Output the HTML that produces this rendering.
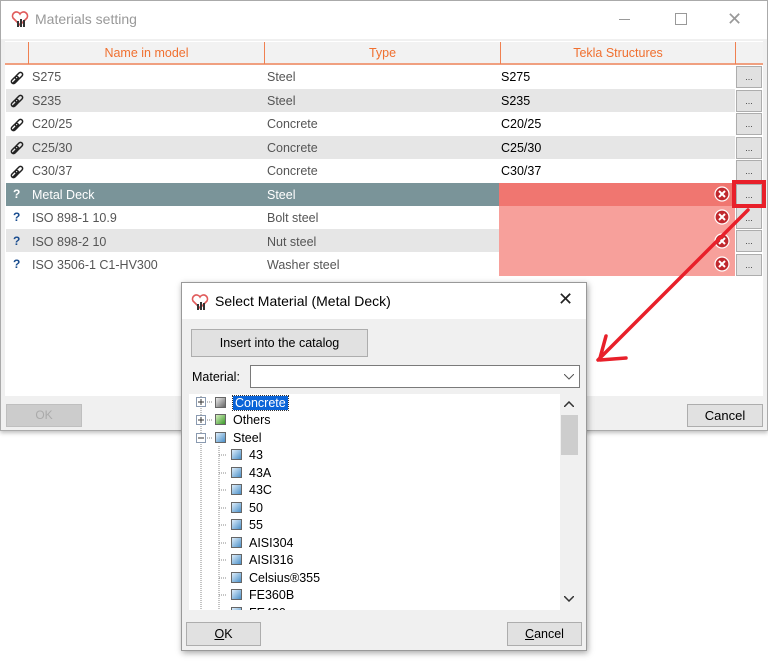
<!DOCTYPE html>
<html><head><style>
*{box-sizing:border-box;margin:0;padding:0}
body{width:768px;height:664px;background:#fff;position:relative;overflow:hidden;font-family:"Liberation Sans",sans-serif;font-size:12px;color:#000}
.abs{position:absolute}
.win{left:0;top:0;width:768px;height:431px;border:1px solid #aaa;background:#f0f0f0;box-shadow:0 2px 4px rgba(0,0,0,.25)}
.row{position:absolute;left:5px;width:729px;height:23px;line-height:23px}
.btn{position:absolute;left:735px;width:26px;height:22px;background:#e1e1e1;border:1px solid #adadad;font-size:9px;text-align:center;line-height:20px;color:#444}
.hdr{color:#f07030;font-size:12.5px;text-align:center;line-height:22px;position:absolute;top:0;height:22px;border-right:1px solid #f08050}
.wb{background:#e1e1e1;border:1px solid #adadad;text-align:center;position:absolute}
.sq{display:inline-block;width:11px;height:11px;border:1px solid #666;vertical-align:-1px;margin-right:7px;background:linear-gradient(135deg,#dfeefa,#4a8fc8)}
.ti{position:absolute;font-size:12.5px;height:18px;line-height:18px}
</style></head><body>
<div class="abs win">
 <div class="abs" style="left:0;top:0;width:766px;height:38px;background:#fff"></div>
 <div class="abs" style="left:10px;top:9px;width:18px;height:18px">
  <svg width="18" height="18"><path d="M9 15 L2 8 A4 4 0 0 1 9 4 A4 4 0 0 1 16 8 Z" fill="none" stroke="#e05a5a" stroke-width="1.6"/><rect x="6" y="11" width="2" height="6" fill="#333"/><rect x="9" y="9" width="2" height="8" fill="#333"/><rect x="12" y="10" width="2" height="7" fill="#333"/></svg></div>
 <div class="abs" style="left:34px;top:10px;font-size:14px;color:#999">Materials setting</div>
 <div class="abs" style="left:618px;top:18px;width:11px;height:1px;background:#999"></div>
 <div class="abs" style="left:674px;top:12px;width:12px;height:12px;border:1px solid #999"></div>
 <div class="abs" style="left:726px;top:8px;font-size:18px;color:#999">✕</div>
 <div class="abs" style="left:4px;top:40px;width:758px;height:355px;background:#fff"></div>
 <div class="abs" style="left:4px;top:41px;width:758px;height:23px;background:#f2f2f2;border-bottom:2px solid #f0a080">
  <div class="hdr" style="left:0;width:24px"></div>
  <div class="hdr" style="left:24px;width:236px">Name in model</div>
  <div class="hdr" style="left:260px;width:236px">Type</div>
  <div class="hdr" style="left:496px;width:235px">Tekla Structures</div>
 </div>
 <div class="row" style="top:64px;background:#fff"></div>
 <div class="row" style="top:88px;background:#e6e6e6"></div>
 <div class="row" style="top:111px;background:#fff"></div>
 <div class="row" style="top:135px;background:#e6e6e6"></div>
 <div class="row" style="top:158px;background:#fff"></div>
 <div class="row" style="top:182px;background:#7a9499"></div>
 <div class="row" style="top:205px;background:#fff"></div>
 <div class="row" style="top:228px;background:#e6e6e6"></div>
 <div class="row" style="top:252px;background:#fff"></div>
 <div class="abs" style="left:498px;top:182px;width:236px;height:23px;background:#f07670"></div>
 <div class="abs" style="left:498px;top:205px;width:236px;height:70px;background:#f7a09b"></div>
 <div class="abs" style="left:0;top:0;width:766px;font-size:12.5px;color:#555">
  <div class="abs" style="left:31px;top:69px">S275</div><div class="abs" style="left:266px;top:69px">Steel</div><div class="abs" style="left:500px;top:69px;color:#000">S275</div>
  <div class="abs" style="left:31px;top:93px">S235</div><div class="abs" style="left:266px;top:93px">Steel</div><div class="abs" style="left:500px;top:93px;color:#000">S235</div>
  <div class="abs" style="left:31px;top:116px">C20/25</div><div class="abs" style="left:266px;top:116px">Concrete</div><div class="abs" style="left:500px;top:116px;color:#000">C20/25</div>
  <div class="abs" style="left:31px;top:140px">C25/30</div><div class="abs" style="left:266px;top:140px">Concrete</div><div class="abs" style="left:500px;top:140px;color:#000">C25/30</div>
  <div class="abs" style="left:31px;top:163px">C30/37</div><div class="abs" style="left:266px;top:163px">Concrete</div><div class="abs" style="left:500px;top:163px;color:#000">C30/37</div>
  <div class="abs" style="left:31px;top:187px;color:#fff">Metal Deck</div><div class="abs" style="left:266px;top:187px;color:#fff">Steel</div>
  <div class="abs" style="left:31px;top:210px">ISO 898-1 10.9</div><div class="abs" style="left:266px;top:210px">Bolt steel</div>
  <div class="abs" style="left:31px;top:234px">ISO 898-2 10</div><div class="abs" style="left:266px;top:234px">Nut steel</div>
  <div class="abs" style="left:31px;top:257px">ISO 3506-1 C1-HV300</div><div class="abs" style="left:266px;top:257px">Washer steel</div>
 </div>
 <svg class="abs" style="left:8px;top:70px" width="16" height="110">
  <g fill="none" stroke="#222" stroke-width="2">
   <g id="lk"><path d="M4 12 L9 7 M3 9 L6 6 A2 2 0 0 1 9 9 L6 12 A2 2 0 0 1 3 9 Z M7 5 L10 2 A2 2 0 0 1 13 5 L10 8 A2 2 0 0 1 7 5 Z" stroke-width="1.5"/></g>
   <use href="#lk" y="23"/><use href="#lk" y="47"/><use href="#lk" y="70"/><use href="#lk" y="94"/>
  </g></svg>
 <div class="abs" style="left:12px;top:186px;color:#fff;font-weight:bold;font-size:12px">?</div>
 <div class="abs" style="left:12px;top:209px;color:#1a4d8f;font-weight:bold;font-size:12px">?</div>
 <div class="abs" style="left:12px;top:233px;color:#1a4d8f;font-weight:bold;font-size:12px">?</div>
 <div class="abs" style="left:12px;top:256px;color:#1a4d8f;font-weight:bold;font-size:12px">?</div>
 <svg class="abs" style="left:713px;top:185px" width="16" height="90">
  <g id="er"><circle cx="8" cy="8" r="7" fill="#c0282d" stroke="#fff" stroke-width="1.2"/><path d="M5 5 L11 11 M11 5 L5 11" stroke="#fff" stroke-width="2"/></g>
  <use href="#er" y="23"/><use href="#er" y="47"/><use href="#er" y="70"/></svg>
 <div class="btn" style="top:65px">...</div>
 <div class="btn" style="top:89px">...</div>
 <div class="btn" style="top:112px">...</div>
 <div class="btn" style="top:136px">...</div>
 <div class="btn" style="top:159px">...</div>
 <div class="btn" style="top:183px">...</div>
 <div class="btn" style="top:206px">...</div>
 <div class="btn" style="top:229px">...</div>
 <div class="btn" style="top:253px">...</div>
 <div class="wb" style="left:5px;top:403px;width:76px;height:23px;line-height:21px;color:#aaa;background:#ccc;border-color:#bfbfbf">OK</div>
 <div class="wb" style="left:686px;top:403px;width:76px;height:23px;line-height:21px;font-size:13px">Cancel</div>
</div>
<div class="abs" style="left:732px;top:180px;width:34px;height:28px;border:4px solid #e8202a"></div>
<svg class="abs" style="left:0;top:0" width="768" height="664"><g stroke="#e8202a" stroke-width="3.5" fill="none" stroke-linecap="round"><path d="M748 210 L598 360"/><path d="M600 358 L606 336 M600 360 L626 358"/></g></svg>
<div class="abs" style="left:181px;top:282px;width:406px;height:369px;background:#f0f0f0;border:1px solid #999;box-shadow:1px 2px 6px rgba(0,0,0,.35)">
 <div class="abs" style="left:0;top:0;width:404px;height:36px;background:#fff"></div>
 <svg class="abs" style="left:9px;top:10px" width="18" height="18"><path d="M9 15 L2 8 A4 4 0 0 1 9 4 A4 4 0 0 1 16 8 Z" fill="none" stroke="#e05a5a" stroke-width="1.6"/><rect x="6" y="11" width="2" height="6" fill="#333"/><rect x="9" y="9" width="2" height="8" fill="#333"/><rect x="12" y="10" width="2" height="7" fill="#333"/></svg>
 <div class="abs" style="left:33px;top:10px;font-size:14px">Select Material (Metal Deck)</div>
 <div class="abs" style="left:376px;top:6px;font-size:18px;color:#222">✕</div>
 <div class="wb" style="left:9px;top:46px;width:177px;height:28px;line-height:26px;font-size:12.5px">Insert into the catalog</div>
 <div class="abs" style="left:10px;top:87px;font-size:12.5px">Material:</div>
 <div class="abs" style="left:68px;top:82px;width:330px;height:23px;background:#fff;border:1px solid #7a7a7a"><svg class="abs" style="right:5px;top:8px" width="10" height="6"><path d="M0 0 L5 5 L10 0" fill="none" stroke="#555"/></svg></div>
 <div class="abs" style="left:7px;top:111px;width:371px;height:216px;background:#fff;overflow:hidden">
  <svg class="abs" style="left:0;top:0" width="60" height="216"><g stroke="#888" stroke-dasharray="1,1" fill="none"><path d="M12 2 V216 M30 52 V216"/><path d="M16 8 H24 M16 26 H24 M16 44 H24"/><path d="M30 61 H37 M30 79 H37 M30 96 H37 M30 114 H37 M30 131 H37 M30 149 H37 M30 166 H37 M30 184 H37 M30 201 H37"/></g>
   <g fill="#fff" stroke="#8a9ab0"><rect x="7.5" y="3.5" width="9" height="9"/><rect x="7.5" y="21.5" width="9" height="9"/><rect x="7.5" y="39.5" width="9" height="9"/></g>
   <g stroke="#333"><path d="M9 8 H15 M12 5 V11 M9 26 H15 M12 23 V29 M9 44 H15"/></g></svg>
  <div class="ti" style="left:26px;top:0"><span class="sq" style="background:linear-gradient(135deg,#eee,#666)"></span><span style="background:#0a64d8;color:#fff;outline:1px dotted #333;padding:0 2px">Concrete</span></div>
  <div class="ti" style="left:26px;top:17px"><span class="sq" style="background:linear-gradient(135deg,#d8f0c0,#3a9a2a)"></span>Others</div>
  <div class="ti" style="left:26px;top:35px"><span class="sq"></span>Steel</div>
  <div class="ti" style="left:42px;top:52px"><span class="sq"></span>43</div>
  <div class="ti" style="left:42px;top:70px"><span class="sq"></span>43A</div>
  <div class="ti" style="left:42px;top:87px"><span class="sq"></span>43C</div>
  <div class="ti" style="left:42px;top:105px"><span class="sq"></span>50</div>
  <div class="ti" style="left:42px;top:122px"><span class="sq"></span>55</div>
  <div class="ti" style="left:42px;top:140px"><span class="sq"></span>AISI304</div>
  <div class="ti" style="left:42px;top:157px"><span class="sq"></span>AISI316</div>
  <div class="ti" style="left:42px;top:175px"><span class="sq"></span>Celsius®355</div>
  <div class="ti" style="left:42px;top:192px"><span class="sq"></span>FE360B</div>
  <div class="ti" style="left:42px;top:210px"><span class="sq"></span>FE430</div>
 </div>
 <div class="abs" style="left:378px;top:111px;width:19px;height:216px;background:#f0f0f0">
  <svg class="abs" style="left:4px;top:7px" width="10" height="6"><path d="M0 6 L5 1 L10 6" fill="none" stroke="#333" stroke-width="1.5"/></svg>
  <div class="abs" style="left:1px;top:21px;width:17px;height:40px;background:#cdcdcd"></div>
  <svg class="abs" style="left:4px;top:202px" width="10" height="6"><path d="M0 0 L5 5 L10 0" fill="none" stroke="#333" stroke-width="1.5"/></svg>
 </div>
 <div class="wb" style="left:4px;top:339px;width:75px;height:24px;line-height:22px;font-size:12.5px"><u>O</u>K</div>
 <div class="wb" style="left:325px;top:339px;width:75px;height:24px;line-height:22px;font-size:12.5px"><u>C</u>ancel</div>
</div>
</body></html>
